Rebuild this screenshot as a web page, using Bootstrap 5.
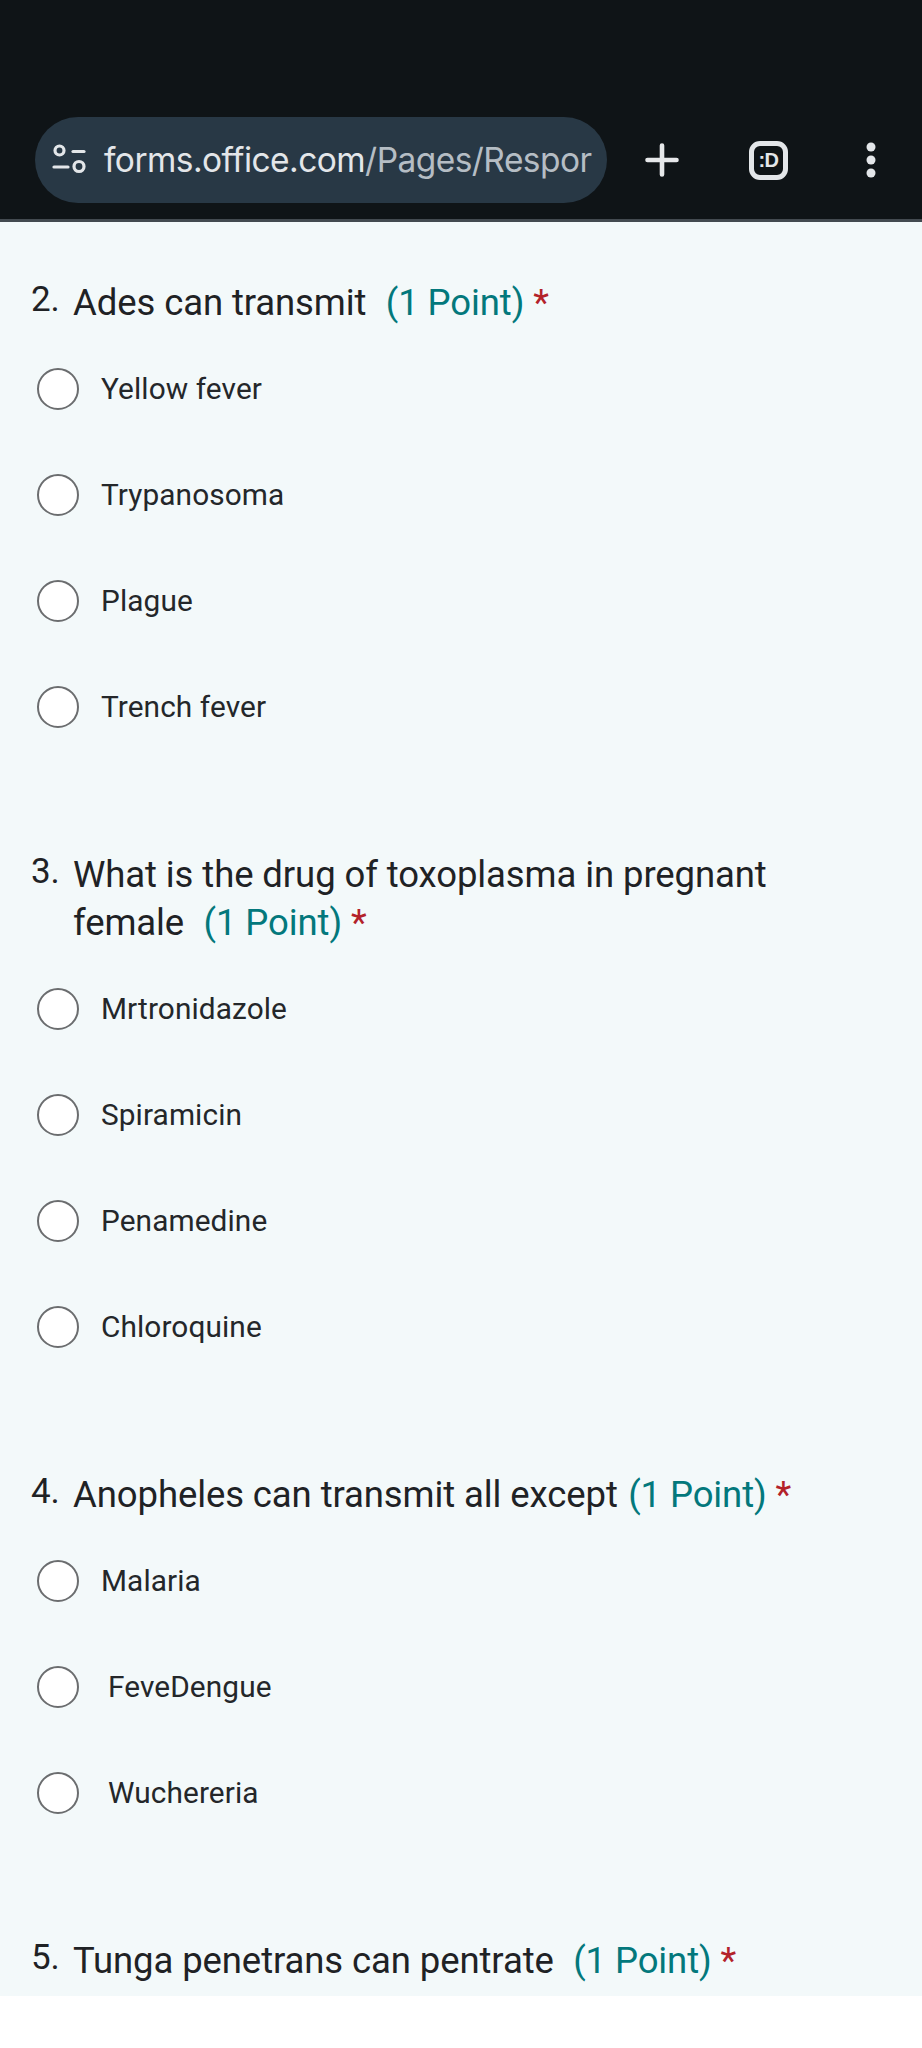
<!DOCTYPE html>
<html lang="en">
<head>
<meta charset="utf-8">
<title>Form</title>
<link href="https://cdn.jsdelivr.net/npm/bootstrap@5.3.0/dist/css/bootstrap.min.css" rel="stylesheet">
<style>
html,body{background:#fff;font-family:Roboto,"Liberation Sans",sans-serif;}
.topbar{height:222px;background:#0f1417;border-bottom:3px solid #434a50;padding:117px 0 16px 35px;}
.urlpill{width:572px;height:86px;background:#283845;border-radius:43px;padding-left:17px;overflow:hidden;}
.urltext{font-family:Inter,Roboto,sans-serif;font-size:33.5px;letter-spacing:-.55px;color:#e3e6e9;white-space:nowrap;}
.urltext span{color:#b5bdc4;}
.tb-plus{margin-left:38px;}
.tb-d{width:39px;height:39px;margin-left:70px;border:5px solid #e3e6e9;border-radius:11px;color:#e3e6e9;font:700 20px/1 "Liberation Sans",sans-serif;letter-spacing:-.5px;}
.tb-dots{margin-left:78px;}
.formbody{background:#f3f9fa;padding:57px 0 11px 31px;color:#1f2225;}
.qhead{font-size:36.5px;line-height:48px;letter-spacing:-.1px;padding-right:60px;}
.qnum{width:42px;font-size:35px;line-height:42px;flex:none;}
.qpoint{color:#03787c;margin-left:1.5px;}
.qstar{color:#b3222a;}
.qgap{margin-top:91px;}
.optlist{margin-top:9px;}
.optrow{height:106px;}
.radiodot.form-check-input{width:42px;height:42px;margin:0 0 0 6px;background:#fff;border:2.5px solid #6b6d6f;flex:none;}
.opttext{font-size:29.8px;margin-left:22px;letter-spacing:.1px;color:#24272a;}
.optshift{margin-left:29px;}
</style>
</head>
<body>
<header class="topbar d-flex align-items-center">
  <div class="urlpill d-flex align-items-center flex-shrink-0">
    <svg class="flex-shrink-0 me-3" width="36" height="36" viewBox="0 0 36 36" fill="none" stroke="#e3e6e9" stroke-width="3.2" stroke-linecap="round">
      <circle cx="7.5" cy="8.5" r="4.5"/><path d="M21 9.5h11"/><path d="M2 25h14"/><circle cx="27" cy="24.5" r="5"/>
    </svg>
    <div class="urltext">forms.office.com<span>/Pages/Respor</span></div>
  </div>
  <svg class="tb-plus flex-shrink-0" width="34" height="34" viewBox="0 0 34 34" stroke="#e6e8ea" stroke-width="4.6" stroke-linecap="round"><path d="M17 2.5v29M2.5 17h29"/></svg>
  <div class="tb-d d-flex align-items-center justify-content-center flex-shrink-0">:D</div>
  <svg class="tb-dots flex-shrink-0" width="10" height="36" viewBox="0 0 10 36" fill="#e3e6e9"><circle cx="5" cy="5" r="4.5"/><circle cx="5" cy="18" r="4.5"/><circle cx="5" cy="31" r="4.5"/></svg>
</header>
<main class="formbody">
  <section>
    <div class="qhead d-flex"><div class="qnum">2.</div><div>Ades can transmit&nbsp; <span class="qpoint">(1 Point)</span> <span class="qstar">*</span></div></div>
    <div class="optlist">
      <div class="optrow d-flex align-items-center"><input class="form-check-input radiodot" type="radio" name="q2" aria-label="Yellow fever"><span class="opttext">Yellow fever</span></div>
      <div class="optrow d-flex align-items-center"><input class="form-check-input radiodot" type="radio" name="q2" aria-label="Trypanosoma"><span class="opttext">Trypanosoma</span></div>
      <div class="optrow d-flex align-items-center"><input class="form-check-input radiodot" type="radio" name="q2" aria-label="Plague"><span class="opttext">Plague</span></div>
      <div class="optrow d-flex align-items-center"><input class="form-check-input radiodot" type="radio" name="q2" aria-label="Trench fever"><span class="opttext">Trench fever</span></div>
    </div>
  </section>
  <section class="qgap">
    <div class="qhead d-flex"><div class="qnum">3.</div><div>What is the drug of toxoplasma in pregnant female&nbsp; <span class="qpoint">(1 Point)</span> <span class="qstar">*</span></div></div>
    <div class="optlist">
      <div class="optrow d-flex align-items-center"><input class="form-check-input radiodot" type="radio" name="q3" aria-label="Mrtronidazole"><span class="opttext">Mrtronidazole</span></div>
      <div class="optrow d-flex align-items-center"><input class="form-check-input radiodot" type="radio" name="q3" aria-label="Spiramicin"><span class="opttext">Spiramicin</span></div>
      <div class="optrow d-flex align-items-center"><input class="form-check-input radiodot" type="radio" name="q3" aria-label="Penamedine"><span class="opttext">Penamedine</span></div>
      <div class="optrow d-flex align-items-center"><input class="form-check-input radiodot" type="radio" name="q3" aria-label="Chloroquine"><span class="opttext">Chloroquine</span></div>
    </div>
  </section>
  <section class="qgap">
    <div class="qhead d-flex"><div class="qnum">4.</div><div>Anopheles can transmit all except <span class="qpoint">(1 Point)</span> <span class="qstar">*</span></div></div>
    <div class="optlist">
      <div class="optrow d-flex align-items-center"><input class="form-check-input radiodot" type="radio" name="q4" aria-label="Malaria"><span class="opttext">Malaria</span></div>
      <div class="optrow d-flex align-items-center"><input class="form-check-input radiodot" type="radio" name="q4" aria-label="FeveDengue"><span class="opttext optshift">FeveDengue</span></div>
      <div class="optrow d-flex align-items-center"><input class="form-check-input radiodot" type="radio" name="q4" aria-label="Wuchereria"><span class="opttext optshift">Wuchereria</span></div>
    </div>
  </section>
  <section class="qgap">
    <div class="qhead d-flex"><div class="qnum">5.</div><div>Tunga penetrans can pentrate&nbsp; <span class="qpoint">(1 Point)</span> <span class="qstar">*</span></div></div>
  </section>
</main>
<script src="https://cdn.jsdelivr.net/npm/bootstrap@5.3.0/dist/js/bootstrap.bundle.min.js"></script>
</body>
</html>
